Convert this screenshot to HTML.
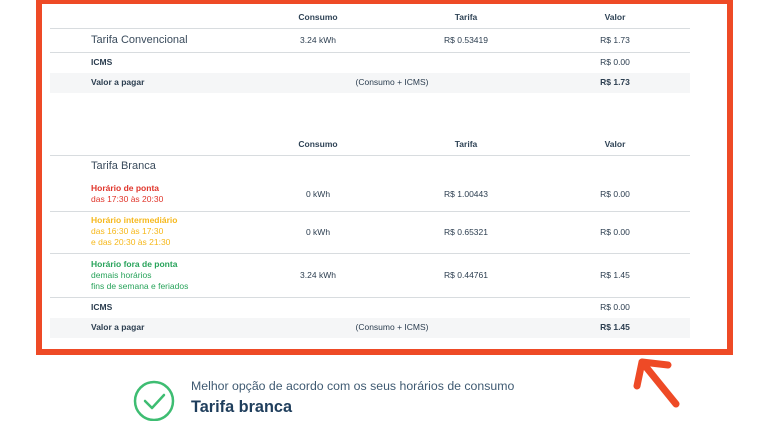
<!DOCTYPE html>
<html><head><style>
body{margin:0;width:768px;height:421px;background:#fff;font-family:"Liberation Sans",sans-serif;position:relative;overflow:hidden;color:#2b3d4f}
.frame{position:absolute;left:36px;top:-2px;width:685px;height:345px;border:6px solid #ee4a26}
.t{position:absolute;font-size:8.5px;white-space:nowrap}
.h{font-weight:bold;color:#2f4356}
.c{transform:translateX(-50%)}
.line{position:absolute;left:50px;width:640px;height:1px;background:#d8dcdf}
.shade{position:absolute;left:50px;width:640px;background:#f5f6f7}
.b{font-weight:bold}
.big{font-size:11px;color:#3a4b5c}
.r{color:#e0352b}.y{color:#f6b81b}.g{color:#27a35a}
</style></head><body>
<div class="frame"></div>
<div class="shade" style="top:73px;height:20px"></div>
<div class="shade" style="top:318px;height:20px"></div>
<div class="line" style="top:28px"></div>
<div class="line" style="top:52px"></div>
<div class="line" style="top:155px"></div>
<div class="line" style="top:211px"></div>
<div class="line" style="top:253px"></div>
<div class="line" style="top:297px"></div>

<div class="t h c" style="left:318px;top:12px">Consumo</div>
<div class="t h c" style="left:466px;top:12px">Tarifa</div>
<div class="t h c" style="left:615px;top:12px">Valor</div>
<div class="t big" style="left:91px;top:34px">Tarifa Convencional</div>
<div class="t c" style="left:318px;top:35px">3.24 kWh</div>
<div class="t c" style="left:466px;top:35px">R$ 0.53419</div>
<div class="t c" style="left:615px;top:35px">R$ 1.73</div>
<div class="t b" style="left:91px;top:57px">ICMS</div>
<div class="t c" style="left:615px;top:57px">R$ 0.00</div>
<div class="t b" style="left:91px;top:77px">Valor a pagar</div>
<div class="t c" style="left:392px;top:77px">(Consumo + ICMS)</div>
<div class="t b c" style="left:615px;top:77px">R$ 1.73</div>

<div class="t h c" style="left:318px;top:139px">Consumo</div>
<div class="t h c" style="left:466px;top:139px">Tarifa</div>
<div class="t h c" style="left:615px;top:139px">Valor</div>
<div class="t big" style="left:91px;top:160px">Tarifa Branca</div>
<div class="t r b" style="left:91px;top:183px">Horário de ponta</div>
<div class="t r" style="left:91px;top:194px">das 17:30 às 20:30</div>
<div class="t c" style="left:318px;top:189px">0 kWh</div>
<div class="t c" style="left:466px;top:189px">R$ 1.00443</div>
<div class="t c" style="left:615px;top:189px">R$ 0.00</div>
<div class="t y b" style="left:91px;top:215px">Horário intermediário</div>
<div class="t y" style="left:91px;top:226px">das 16:30 às 17:30</div>
<div class="t y" style="left:91px;top:237px">e das 20:30 às 21:30</div>
<div class="t c" style="left:318px;top:227px">0 kWh</div>
<div class="t c" style="left:466px;top:227px">R$ 0.65321</div>
<div class="t c" style="left:615px;top:227px">R$ 0.00</div>
<div class="t g b" style="left:91px;top:259px">Horário fora de ponta</div>
<div class="t g" style="left:91px;top:270px">demais horários</div>
<div class="t g" style="left:91px;top:281px">fins de semana e feriados</div>
<div class="t c" style="left:318px;top:270px">3.24 kWh</div>
<div class="t c" style="left:466px;top:270px">R$ 0.44761</div>
<div class="t c" style="left:615px;top:270px">R$ 1.45</div>
<div class="t b" style="left:91px;top:302px">ICMS</div>
<div class="t c" style="left:615px;top:302px">R$ 0.00</div>
<div class="t b" style="left:91px;top:322px">Valor a pagar</div>
<div class="t c" style="left:392px;top:322px">(Consumo + ICMS)</div>
<div class="t b c" style="left:615px;top:322px">R$ 1.45</div>

<svg style="position:absolute;left:0;top:0" width="768" height="421">
<path d="M642 362 L676 404 M642 362 L668 365 M642 362 L637 386" stroke="#ee4a26" stroke-width="7" stroke-linecap="round" fill="none"/>
<circle cx="154" cy="401" r="19" stroke="#3ebd72" stroke-width="2.5" fill="none"/>
<path d="M145 401 L152 408 L164 395" stroke="#3ebd72" stroke-width="2.5" fill="none" stroke-linecap="round" stroke-linejoin="round"/>
</svg>
<div class="t" style="left:191px;top:379px;font-size:12.3px;color:#3f5a72">Melhor opção de acordo com os seus horários de consumo</div>
<div class="t" style="left:191px;top:398px;font-size:16.3px;font-weight:bold;color:#1f3e5c">Tarifa branca</div>
</body></html>
